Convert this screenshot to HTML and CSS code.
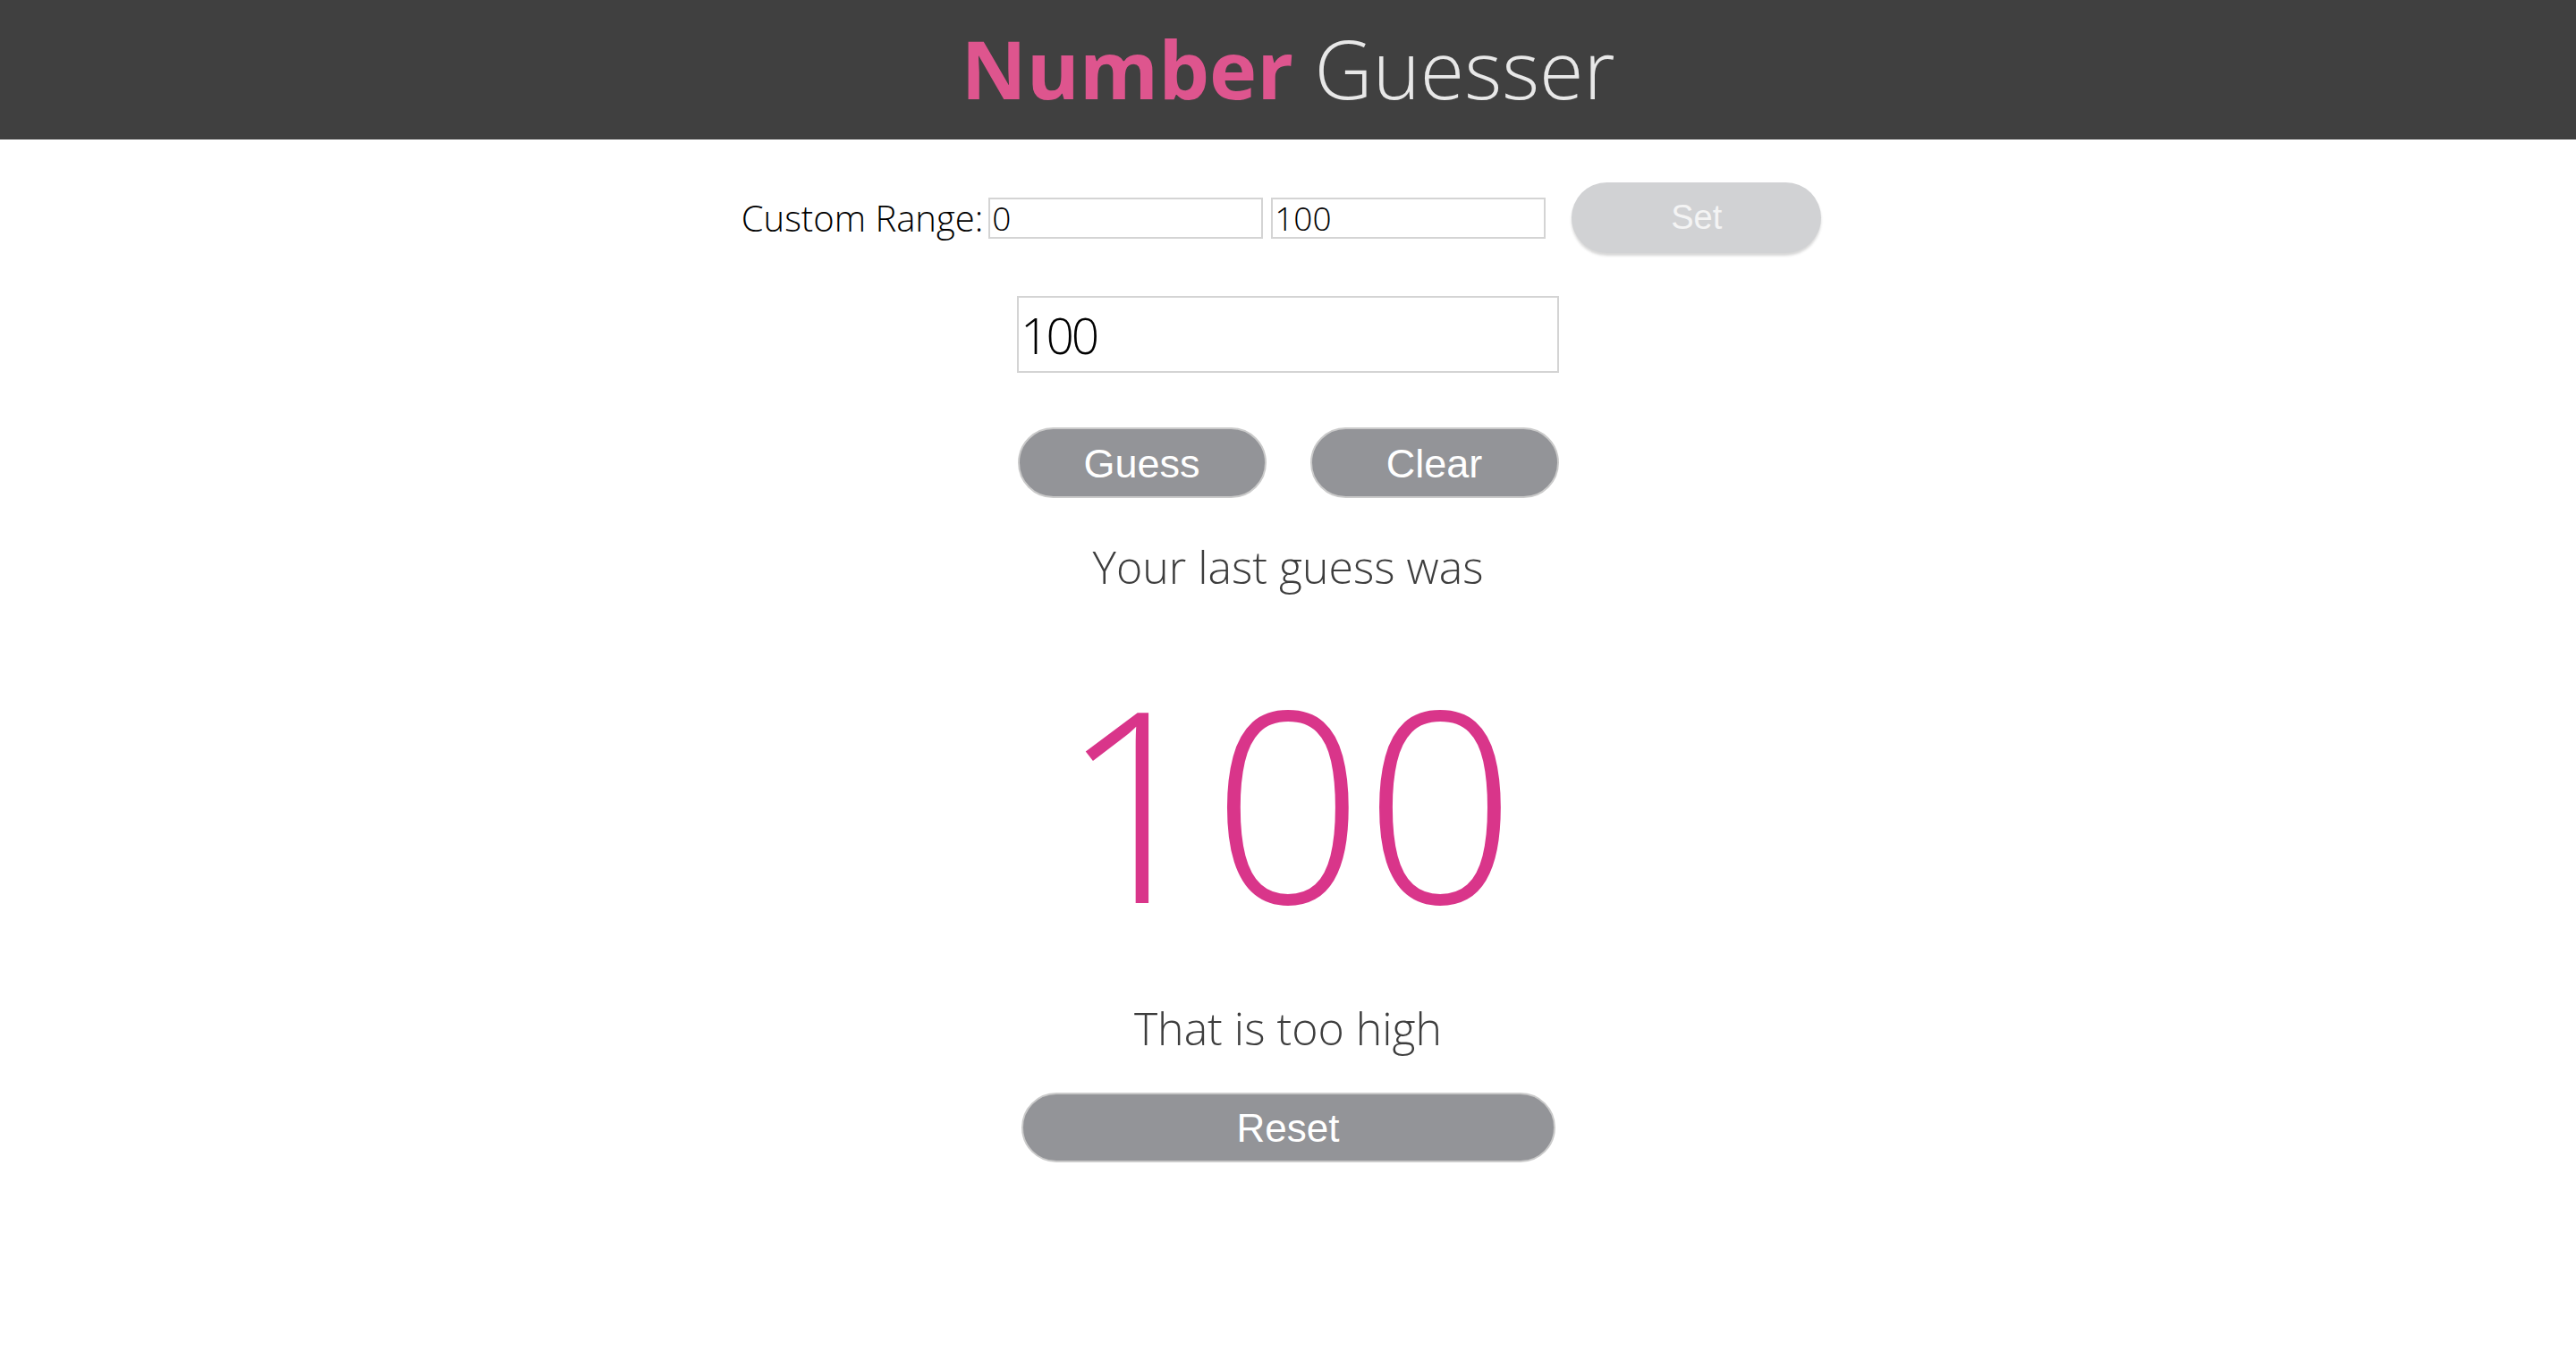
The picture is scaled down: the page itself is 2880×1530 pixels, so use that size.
FILE: index.html
```html
<!DOCTYPE html>
<html lang="en">
<head>
<meta charset="utf-8">
<title>Number Guesser</title>
<link rel="stylesheet" href="styles.css">
</head>
<body>
<header class="masthead">
  <h1 class="title"><span class="title-accent">Number</span> Guesser</h1>
</header>
<main class="game">
  <form class="range-row">
    <label class="range-label" for="range-min">Custom Range:</label>
    <input class="range-input" id="range-min" type="text" value="0">
    <input class="range-input range-input-last" id="range-max" type="text" value="100">
    <button class="btn btn-set" type="button">Set</button>
  </form>
  <input class="guess-input" type="text" value="100">
  <div class="guess-actions">
    <button class="btn btn-action" type="button">Guess</button>
    <button class="btn btn-action" type="button">Clear</button>
  </div>
  <p class="last-label">Your last guess was</p>
  <p class="last-number">100</p>
  <p class="feedback">That is too high</p>
  <button class="btn btn-action btn-wide" type="button">Reset</button>
</main>
</body>
</html>
```

FILE: styles.css
```css
html, body {
  margin: 0;
  padding: 0;
  background: #ffffff;
  font-family: "Open Sans", "Liberation Sans", sans-serif;
}

.masthead {
  height: 156px;
  background: #404040;
  display: flex;
  justify-content: center;
}

.title {
  margin: 0;
  font-size: 90px;
  line-height: 152px;
  font-weight: 300;
  color: #e8e8e8;
}

.title-accent {
  font-weight: 700;
  color: #de558e;
}

.game {
  display: flex;
  flex-direction: column;
  align-items: center;
}

.range-row {
  display: flex;
  align-items: center;
  justify-content: center;
  margin: 48px 0 0;
  height: 79px;
  padding-right: 15px;
}

.range-label {
  font-size: 40px;
  font-weight: 300;
  color: #000000;
  margin-right: 6px;
}

.range-input {
  box-sizing: border-box;
  width: 307px;
  height: 46px;
  margin: 0 9px 0 0;
  padding: 0 2px;
  border: 2px solid #d4d4d4;
  font-family: "Open Sans", sans-serif;
  font-weight: 300;
  font-size: 37px;
  color: #000000;
  outline: none;
}

.range-input-last {
  margin-right: 29px;
}

.btn {
  box-sizing: border-box;
  font-family: "Liberation Sans", Arial, sans-serif;
  color: #ffffff;
  cursor: pointer;
  padding: 0;
}

.btn-set {
  width: 279px;
  height: 79px;
  border: none;
  border-radius: 40px;
  background: #d1d2d4;
  color: #f4f4f4;
  font-size: 38px;
  box-shadow: 0 3px 3px rgba(0, 0, 0, 0.16);
}

.guess-input {
  box-sizing: border-box;
  width: 606px;
  height: 86px;
  margin-top: 48px;
  padding: 0 2px;
  border: 2px solid #d4d4d4;
  font-family: "Open Sans", sans-serif;
  font-weight: 300;
  font-size: 55px;
  letter-spacing: -3px;
  color: #000000;
  outline: none;
}

.guess-actions {
  display: flex;
  gap: 49px;
  margin-top: 61px;
}

.btn-action {
  width: 278px;
  height: 79px;
  border: 2px solid #cacaca;
  border-radius: 40px;
  background: #939498;
  font-size: 45px;
  padding-top: 2px;
}

.last-label,
.feedback {
  margin: 43px 0 0;
  font-size: 50px;
  line-height: 68px;
  font-weight: 300;
  color: #3d3d3d;
}

.last-number {
  margin: 77px 0 0;
  font-size: 298px;
  line-height: 298px;
  font-weight: 300;
  color: #d9358a;
}

.feedback {
  margin-top: 73px;
}

.btn-wide {
  width: 597px;
  height: 78px;
  margin-top: 38px;
  font-size: 44px;
}
```
